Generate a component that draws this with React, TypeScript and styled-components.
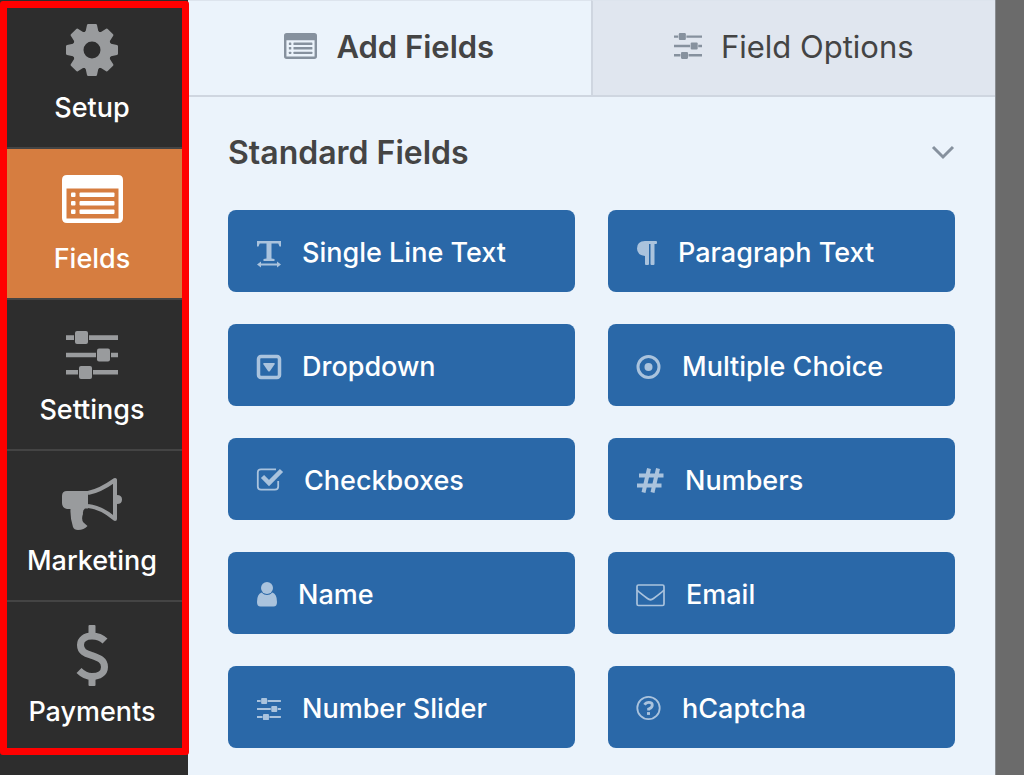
import React from "react";
import styled, { createGlobalStyle } from "styled-components";

const GlobalStyle = createGlobalStyle`
  *, *::before, *::after { box-sizing: border-box; }
  body { margin: 0; background: #6b6b6b; }
  button { font: inherit; border: 0; cursor: pointer; }
  svg { display: block; flex: none; overflow: visible; }
`;

const Page = styled.div`
  display: flex;
  min-height: 100vh;
  font-family: Inter, "Liberation Sans", sans-serif;
`;

const Sidebar = styled.aside`
  flex: none;
  width: 188px;
  background: #2d2d2d;
`;

const Nav = styled.nav`
  position: relative;
  padding-right: 4px;

  &::after {
    content: "";
    position: absolute;
    inset: 1px -1px 0 0;
    border: 7px solid #ff0000;
    border-radius: 3px;
    pointer-events: none;
  }
`;

const NavItem = styled.button<{ $active?: boolean }>`
  display: flex;
  flex-direction: column;
  align-items: center;
  width: 100%;
  padding: 22px 0 25px;
  border-bottom: 2px solid #444444;
  background: ${(p) => (p.$active ? "#d67d40" : "transparent")};
  color: ${(p) => (p.$active ? "#ffffff" : "#999b9d")};

  &:first-child { padding-top: 20px; }
  &:last-child { border-bottom: 0; padding-bottom: 29px; }
`;

const NavLabel = styled.span`
  padding-top: 10px;
  color: #ffffff;
  font-size: 27px;
  font-weight: 500;
  line-height: 28px;
`;

const Panel = styled.main`
  flex: 1;
  min-width: 0;
  background: #ebf3fb;
`;

const Tabs = styled.div`
  display: flex;
  border-bottom: 2px solid #cfd6e0;
`;

const Tab = styled.button<{ $active?: boolean }>`
  display: flex;
  flex: 1;
  align-items: center;
  justify-content: center;
  gap: 19px;
  height: 95px;
  padding: 0 0 4px;
  border-top: 1px solid #dde4ed;
  background: ${(p) => (p.$active ? "#ebf3fb" : "#e0e6ef")};
  color: #444444;
  font-size: 31px;
  font-weight: ${(p) => (p.$active ? 600 : 400)};

  & + & { border-left: 2px solid #cfd6e0; }
  svg { color: #86919e; }
`;

const Section = styled.section`
  padding: 37px 40px 27px;
`;

const SectionHeader = styled.header`
  display: flex;
  align-items: center;
  justify-content: space-between;
  margin-bottom: 38px;
`;

const SectionTitle = styled.h2`
  margin: 0;
  color: #444444;
  font-size: 32px;
  font-weight: 600;
  line-height: 38px;
`;

const Toggle = styled.button`
  padding: 0 0 3px;
  background: none;
  color: #86919e;
`;

const FieldGrid = styled.div`
  display: grid;
  grid-template-columns: 1fr 1fr;
  gap: 32px 33px;
`;

const FieldButton = styled.button`
  display: flex;
  align-items: center;
  gap: 21px;
  height: 82px;
  padding: 0 28px;
  border-radius: 8px;
  background: #2a68a8;
  color: #ffffff;
  font-size: 27px;
  font-weight: 500;
  line-height: 32px;
  text-align: left;

  svg { color: #aac3dd; }
`;

const FieldLabel = styled.span`
  padding-top: 4px;
`;

const Gutter = styled.div`
  flex: none;
  width: 29px;
  border-left: 1px solid #8b8e92;
  background: #6b6b6b;
`;

function NavIcon({ children }: { children: React.ReactNode }) {
  return (
    <svg width="64" height="64" viewBox="0 0 64 64" fill="currentColor" aria-hidden="true">
      {children}
    </svg>
  );
}

function FormShape() {
  return (
    <>
      <path
        fillRule="evenodd"
        d="M5 0H56Q61 0 61 5V43Q61 48 56 48H5Q0 48 0 43V5Q0 0 5 0ZM4.500 13.500V43.500H56.500V13.500Z"
      />
      {[17.5, 26, 34.5].map((y) => (
        <g key={y}>
          <rect x="9" y={y} width="4.5" height="4.5" rx="1" />
          <rect x="17.5" y={y} width="35" height="4.5" rx="1" />
        </g>
      ))}
    </>
  );
}

function SliderShape() {
  return (
    <>
      <path d="M0 4.3h8v4.6H0zM23 4.3h29v4.6H23zM0 21.7h30v4.6H0zM45 21.7h7v4.6h-7zM0 39h12v4.6H0zM27 39h25v4.6H27z" />
      <rect x="9" y="0" width="13" height="13" rx="2" />
      <rect x="31" y="17.5" width="13" height="13" rx="2" />
      <rect x="13" y="35" width="13" height="13" rx="2" />
    </>
  );
}

function GearShape() {
  return (
    <g transform="translate(32 30)">
      <circle r="14" fill="none" stroke="currentColor" strokeWidth="11" />
      {[0, 45, 90, 135, 180, 225, 270, 315].map((a) => (
        <path
          key={a}
          transform={`rotate(${a})`}
          d="M-8 -17L-6.300 -19L-5 -25Q-4.800 -26 -3.800 -26H3.800Q4.800 -26 5 -25L6.300 -19L8 -17Z"
        />
      ))}
    </g>
  );
}

function MegaphoneShape() {
  return (
    <>
      <path d="M7 18H28V35.500H25Q22.500 37 23 41Q21 46 23.500 49.500L27.500 53Q24 57 18 57Q14 57 13 54Q10 45 10.500 36H7Q2 35 2 30V23Q2 18 7 18Z" />
      <path
        d="M28 20C39 18 48 12 55 7V46C48 40 39 34 28 33"
        fill="none"
        stroke="currentColor"
        strokeWidth="4"
        strokeLinejoin="round"
      />
      <path d="M57 22Q62 22 62 26.500T57 31Z" />
    </>
  );
}

function DollarShape() {
  return (
    <>
      <path
        d="M45 17C41 13 37 12 32 12C25 12 20.500 15.500 20.500 21C20.500 28 26 29.500 32 31.500C39 34 44.500 36 44.500 43C44.500 49 39 52.500 32 52.500C27 52.500 22.500 50 19 46.500"
        fill="none"
        stroke="currentColor"
        strokeWidth="7"
      />
      <rect x="28.500" y="1" width="7" height="10" rx="1" />
      <rect x="28.500" y="53" width="7" height="9" rx="1" />
    </>
  );
}

function FieldIcon({ width, children }: { width: number; children: React.ReactNode }) {
  return (
    <svg width={width} height="30" viewBox={`0 0 ${width} 30`} fill="currentColor" aria-hidden="true">
      {children}
    </svg>
  );
}

const navItems = [
  { label: "Setup", icon: <GearShape /> },
  { label: "Fields", icon: <g transform="translate(2 4)"><FormShape /></g>, active: true },
  { label: "Settings", icon: <g transform="translate(6 9)"><SliderShape /></g> },
  { label: "Marketing", icon: <MegaphoneShape /> },
  { label: "Payments", icon: <DollarShape /> },
];

const fields = [
  {
    label: "Single Line Text",
    width: 25,
    icon: (
      <>
        <path d="M1 5H25V10.500H23.500L22.300 7.500H15.500V22.500L18.500 23V25H7.500V23L10.500 22.500V7.500H3.700L2.500 10.500H1Z" />
        <path d="M1 28.500L5 25.500V27.500H21V25.500L25 28.500L21 31.500V29.500H5V31.500Z" />
      </>
    ),
  },
  {
    label: "Paragraph Text",
    width: 21,
    icon: <path d="M9 5H20Q21 5 21 6V7Q21 8 20 8H18.500V28Q18.500 29 17.500 29H15.500Q14.500 29 14.500 28V8H13V28Q13 29 12 29H10Q9 29 9 28V20Q1 19 1 12.500Q1 5 9 5Z" />,
  },
  {
    label: "Dropdown",
    width: 25,
    icon: (
      <>
        <rect x="2.500" y="6.500" width="21" height="21" rx="2.500" fill="none" stroke="currentColor" strokeWidth="3.500" />
        <path d="M7.500 13H18.500Q19 13.500 18.500 14.500L14 21Q13 22 12 21L7.500 14.500Q7 13.500 7.500 13Z" />
      </>
    ),
  },
  {
    label: "Multiple Choice",
    width: 25,
    icon: (
      <>
        <circle cx="12.500" cy="17" r="10.500" fill="none" stroke="currentColor" strokeWidth="3" />
        <circle cx="12.500" cy="17" r="4" />
      </>
    ),
  },
  {
    label: "Checkboxes",
    width: 27,
    icon: (
      <g fill="none" stroke="currentColor">
        <path d="M20 5.300H5Q1.800 5.300 1.800 8.500V22.500Q1.800 25.700 5 25.700H19Q22.200 25.700 22.200 22.500V17" strokeWidth="1.800" />
        <path d="M6.500 12.500L13 19L25.500 6.500" strokeWidth="4.500" />
      </g>
    ),
  },
  {
    label: "Numbers",
    width: 28,
    icon: (
      <path
        d="M13 4.500L7.500 28.500M22 4.500L16.500 28.500M3 11.500H27.500M1 21.500H25.500"
        fill="none"
        stroke="currentColor"
        strokeWidth="4"
      />
    ),
  },
  {
    label: "Name",
    width: 21,
    icon: (
      <>
        <circle cx="11" cy="10" r="6" />
        <path d="M5.500 14.500Q11 19.500 16.500 14.500Q21 16 21 24Q21 28.500 17.500 28.500H4.500Q1 28.500 1 24Q1 16 5.500 14.500Z" />
      </>
    ),
  },
  {
    label: "Email",
    width: 29,
    icon: (
      <g fill="none" stroke="currentColor" strokeWidth="1.700">
        <rect x="1" y="7" width="27" height="20.500" rx="1.500" />
        <path d="M1 12Q4 15 11.500 20.500Q14.500 23 17.500 20.500Q25 15 28 12" />
      </g>
    ),
  },
  {
    label: "Number Slider",
    width: 25,
    icon: <g transform="translate(1 6) scale(.46)"><SliderShape /></g>,
  },
  {
    label: "hCaptcha",
    width: 25,
    icon: (
      <g fill="none" stroke="currentColor">
        <circle cx="12.500" cy="16" r="11.200" strokeWidth="1.800" />
        <path d="M8.500 12.800Q10 10.300 12.700 10.300Q16.300 10.300 16.300 13T12.600 17V18.600" strokeWidth="2.800" />
        <path d="M11 21.500H14" strokeWidth="2.800" />
      </g>
    ),
  },
];

export default function App() {
  return (
    <Page>
      <GlobalStyle />
      <Sidebar>
        <Nav aria-label="Builder">
          {navItems.map((item) => (
            <NavItem key={item.label} type="button" $active={item.active}>
              <NavIcon>{item.icon}</NavIcon>
              <NavLabel>{item.label}</NavLabel>
            </NavItem>
          ))}
        </Nav>
      </Sidebar>
      <Panel>
        <Tabs role="tablist">
          <Tab type="button" role="tab" aria-selected="true" $active>
            <svg width="33" height="26" viewBox="0 0 61 48" fill="currentColor" aria-hidden="true">
              <FormShape />
            </svg>
            Add Fields
          </Tab>
          <Tab type="button" role="tab" aria-selected="false">
            <svg width="28" height="26" viewBox="0 0 52 48" fill="currentColor" aria-hidden="true">
              <SliderShape />
            </svg>
            Field Options
          </Tab>
        </Tabs>
        <Section>
          <SectionHeader>
            <SectionTitle>Standard Fields</SectionTitle>
            <Toggle type="button" aria-label="Collapse Standard Fields" aria-expanded="true">
              <svg width="24" height="14" viewBox="0 0 24 14" fill="none" aria-hidden="true">
                <path d="M2 2L12 12L22 2" stroke="currentColor" strokeWidth="3" />
              </svg>
            </Toggle>
          </SectionHeader>
          <FieldGrid>
            {fields.map((field) => (
              <FieldButton key={field.label} type="button">
                <FieldIcon width={field.width}>{field.icon}</FieldIcon>
                <FieldLabel>{field.label}</FieldLabel>
              </FieldButton>
            ))}
          </FieldGrid>
        </Section>
      </Panel>
      <Gutter />
    </Page>
  );
}
